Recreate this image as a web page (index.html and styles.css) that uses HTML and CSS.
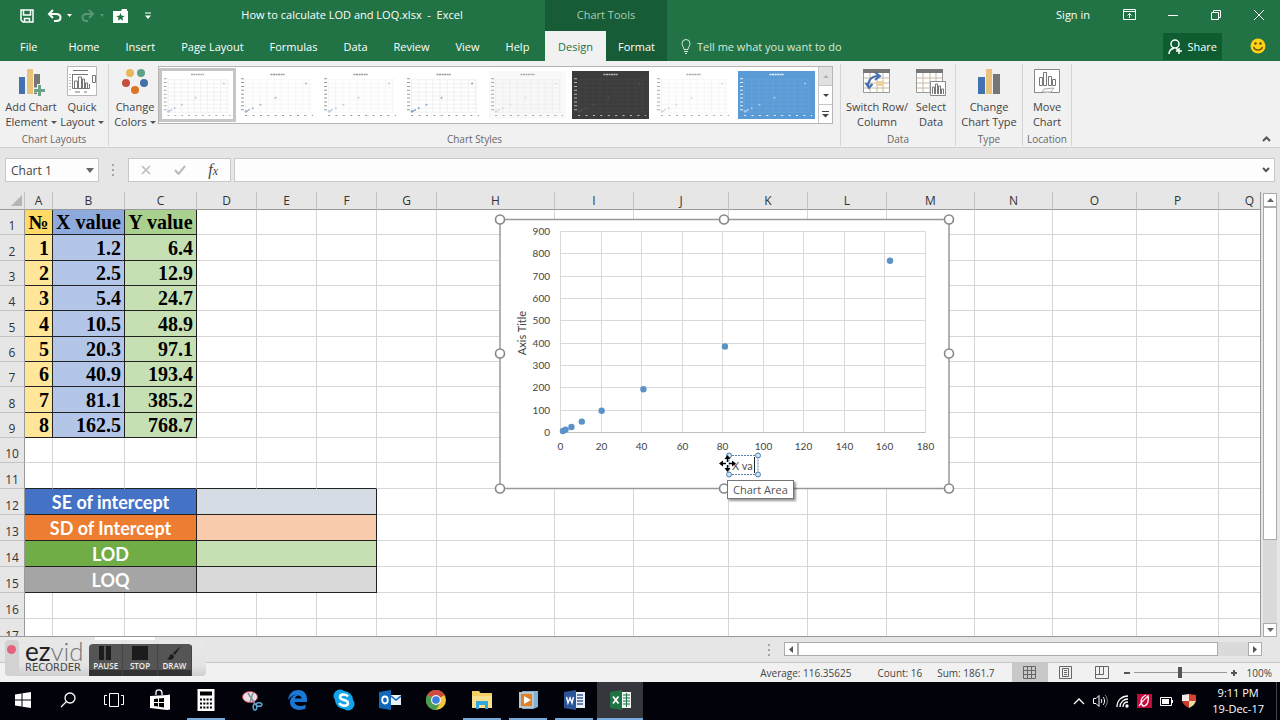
FILE: index.html
```html
<!DOCTYPE html>
<html lang="en">
<head>
  <meta charset="UTF-8" />
  <meta name="viewport" content="width=device-width, initial-scale=1.0"/>
  <title>How to calculate LOD and LOQ.xlsx - Excel</title>
  <link rel="stylesheet" href="styles.css">
</head>
<body>
  <header class="titlebar">
    <div class="titlebar-left">
      <div class="quick-access">
        <button class="qa-btn" aria-label="Save"><svg width="14" height="14" viewBox="0 0 14 14" fill="none" stroke="#fff" stroke-width="1.5"><path d="M1 1h12v12H3l-2-2z"/><path d="M3.500 1v5h7V1M4.500 13V9.500h5V13"/></svg></button>
        <button class="qa-btn" aria-label="Undo"><svg width="26" height="14" viewBox="0 0 26 14"><path d="M6 1L2 5l4 4M2.500 5H9c6 0 6 7 0 7H7" fill="none" stroke="#fff" stroke-width="2"/><path d="M20 5h5l-2.500 3z" fill="#fff"/></svg></button>
        <button class="qa-btn dim" aria-label="Redo"><svg width="24" height="14" viewBox="0 0 24 14"><path d="M8 1l4 4-4 4M11.500 5H6C0 5 0 12 6 12h1" fill="none" stroke="#fff" stroke-width="2"/><path d="M19 5h4l-2 3z" fill="#fff"/></svg></button>
        <button class="qa-btn" aria-label="Favorites"><svg width="16" height="14" viewBox="0 0 16 14"><path d="M0 2h8l1-2h5v2h1v12H0z" fill="#fff"/><path d="M7.500 4l1.200 2.700 3 .2-2.300 1.900.8 2.900-2.700-1.600-2.600 1.600.7-2.900-2.300-1.900 3-.2z" fill="#217346"/></svg></button>
        <button class="qa-btn" aria-label="Customize"><svg width="6" height="8" viewBox="0 0 6 8"><path d="M0 1h6" stroke="#fff"/><path d="M0 3.500h6L3 7z" fill="#fff"/></svg></button>
      </div>
      <div class="doc-title">How to calculate LOD and LOQ.xlsx&nbsp; -&nbsp; Excel</div>
    </div>
    <div class="context-title">Chart Tools</div>
    <div class="titlebar-right">
      <a class="sign-in" href="#">Sign in</a>
      <button class="win-btn" aria-label="Ribbon display options"><svg width="13" height="11" viewBox="0 0 13 11" fill="none" stroke="#fff"><path d="M.5.5h12v10H.5zM.5 2.500h12M6.500 9V4.500M4.500 6.500l2-2 2 2"/></svg></button>
      <button class="win-btn" aria-label="Minimize"><svg width="10" height="10" viewBox="0 0 10 10"><path d="M0 5.500h10" stroke="#fff"/></svg></button>
      <button class="win-btn" aria-label="Restore"><svg width="10" height="10" viewBox="0 0 10 10" fill="none" stroke="#fff"><path d="M.5 2.500h7v7h-7zM2.500 2.500v-2h7v7h-2"/></svg></button>
      <button class="win-btn" aria-label="Close"><svg width="10" height="10" viewBox="0 0 10 10"><path d="M0 0l10 10M10 0L0 10" stroke="#fff"/></svg></button>
    </div>
  </header>

  <nav class="tabs">
    <div class="tabs-main">
      <button class="tab tab-file">File</button>
      <button class="tab">Home</button>
      <button class="tab">Insert</button>
      <button class="tab">Page Layout</button>
      <button class="tab">Formulas</button>
      <button class="tab">Data</button>
      <button class="tab">Review</button>
      <button class="tab">View</button>
      <button class="tab">Help</button>
    </div>
    <div class="tabs-context">
      <button class="tab tab-active">Design</button>
      <button class="tab">Format</button>
    </div>
    <button class="tell-me"><svg width="10" height="15" viewBox="0 0 10 15" fill="none" stroke="#d5eadd"><path d="M3 10.500C3 8 1 7 1 4.500a4 4 0 0 1 8 0C9 7 7 8 7 10.500zM3 12.500h4M4 14.500h2"/></svg>Tell me what you want to do</button>
    <button class="share"><svg width="15" height="16" viewBox="0 0 15 16" fill="none" stroke="#fff" stroke-width="1.500"><circle cx="7" cy="5" r="4"/><path d="M1 15c0-3 2-5 5-6M8 9l2 2M11 9v6M8 12h6"/></svg>Share</button>
    <button class="smile" aria-label="Feedback"><svg width="16" height="16" viewBox="0 0 16 16"><circle cx="8" cy="8" r="7.500" fill="#fcd116"/><circle cx="5.500" cy="5.500" r="1.200" fill="#5b4300"/><circle cx="10.500" cy="5.500" r="1.200" fill="#5b4300"/><path d="M3.500 9c1.500 4 7.500 4 9 0" fill="none" stroke="#5b4300" stroke-width="1.200"/></svg></button>
  </nav>

  <section class="ribbon">
    <div class="group">
      <div class="group-items">
        <button class="big-btn btn-mid"><svg width="28" height="30" viewBox="0 0 28 30"><path d="M2 11h6v17H2z" fill="#4472b0"/><path d="M10 3h6v25h-6z" fill="#e8c27a"/><path d="M17 8h6v20h-6z" fill="#767676"/><path d="M22.500 18v12M17 24h11" stroke="#f1f1f1" stroke-width="5"/><path d="M22.500 19v11M17 24.500h11" stroke="#6ba08a" stroke-width="3"/></svg><span>Add Chart<br>Element<i class="caret"></i></span></button>
        <button class="big-btn"><svg width="30" height="30" viewBox="0 0 30 30" fill="none" stroke="#777"><path d="M.5.500h29v29H.5z" fill="#fff" stroke="#b8b8b8"/><path d="M6 4.500h15M6 8.500h15M5.500 8v14.500h17V18M25.500 9.500h3v7h-3zM8 26h5M17 26h3"/><path d="M7.500 22v-7h3v7M11.500 22V11h3v11M15.500 22v-9h2v9M18.500 22v-5h2v5"/><path d="M3 8v16" stroke-dasharray="1 2"/></svg><span>Quick<br>Layout<i class="caret"></i></span></button>
      </div>
      <div class="group-label">Chart Layouts</div>
    </div>
    <div class="group group-styles">
      <div class="group-items">
        <button class="big-btn"><svg width="28" height="30" viewBox="0 0 28 30"><circle cx="9" cy="7" r="4" fill="#e8b75c"/><circle cx="20" cy="7" r="4" fill="#5fa286"/><circle cx="5" cy="17" r="4" fill="#c6503b"/><circle cx="23" cy="17" r="4" fill="#4472a8"/><circle cx="14" cy="24" r="4" fill="#dd7422"/></svg><span>Change<br>Colors<i class="caret"></i></span></button>
        <div class="gallery">
          <div class="thumbs" id="thumbs"></div>
          <div class="gallery-scroll">
            <button class="gs-btn gs-off" aria-label="Previous styles"><svg width="6" height="3" viewBox="0 0 6 3"><path d="M0 3h6L3 0z" fill="#b0b0b0"/></svg></button>
            <button class="gs-btn" aria-label="Next styles"><svg width="6" height="3" viewBox="0 0 6 3"><path d="M0 0h6L3 3z" fill="#444"/></svg></button>
            <button class="gs-btn" aria-label="More styles"><svg width="7" height="7" viewBox="0 0 7 7"><path d="M0 .5h7" stroke="#444"/><path d="M0 3h7L3.500 6.500z" fill="#444"/></svg></button>
          </div>
        </div>
      </div>
      <div class="group-label">Chart Styles</div>
    </div>
    <div class="group">
      <div class="group-items">
        <button class="big-btn btn-wide"><svg width="28" height="30" viewBox="0 0 28 30" fill="none"><path d="M.5 4.500h26v22H.5z" fill="#fff" stroke="#999"/><path d="M0 3h27v4H0z" fill="#767676"/><path d="M1 12h25M1 17h25M1 22h25M7 7v19M14 7v19M20 7v19" stroke="#c8b8a0"/><path d="M14 15h6v5h-6z" fill="#f3cf9b"/><path d="M5 20C5 14 9 10 15 10M2.500 17L6 22l3.500-4M12 6.500l5 3.500-5 4" stroke="#3f6fb0" stroke-width="2"/></svg><span>Switch Row/<br>Column</span></button>
        <button class="big-btn btn-small"><svg width="30" height="30" viewBox="0 0 30 30" fill="none"><path d="M.5 4.500h26v22H.5z" fill="#fff" stroke="#999"/><path d="M0 3h27v4H0z" fill="#767676"/><path d="M1 12h25M1 17h25M1 22h25M7 7v19M14 7v19M20 7v19" stroke="#c8b8a0"/><path d="M14.500 15.500h15v14h-15z" fill="#fff" stroke="#888"/><path d="M16.500 28v-7h2v7M19.500 28v-10h2v10M22.500 28v-8h2v8M25.500 28v-5h2v5" stroke="#777"/></svg><span>Select<br>Data</span></button>
      </div>
      <div class="group-label">Data</div>
    </div>
    <div class="group">
      <div class="group-items">
        <button class="big-btn btn-type"><svg width="24" height="30" viewBox="0 0 24 30"><path d="M1 11h7v17H1z" fill="#4472b0"/><path d="M9 3h6v25H9z" fill="#e8c27a"/><path d="M16 8h7v20h-7z" fill="#767676"/></svg><span>Change<br>Chart Type</span></button>
      </div>
      <div class="group-label">Type</div>
    </div>
    <div class="group">
      <div class="group-items">
        <button class="big-btn btn-small"><svg width="28" height="30" viewBox="0 0 28 30" fill="none" stroke="#888"><path d="M1.500 3.500h25v23h-9l-3-1-4 1h-9z" fill="#fff"/><path d="M6.500 19.500v-8h3v8zM10.500 19.500v-13h3v13zM15.500 19.500v-9h3v9zM19.500 19.500v-6h3v6z" stroke="#777"/><path d="M9 26l2-3 10-1-3 4z" fill="#fff" stroke="#aaa"/></svg><span>Move<br>Chart</span></button>
      </div>
      <div class="group-label">Location</div>
    </div>
    <button class="collapse" aria-label="Collapse the ribbon"><svg width="9" height="6" viewBox="0 0 9 6"><path d="M1 5l3.500-3.500L8 5" fill="none" stroke="#555" stroke-width="2"/></svg></button>
  </section>

  <div class="formula-bar">
    <div class="name-box">
      <input class="name-input" aria-label="Name box" value="Chart 1">
      <button class="name-drop" aria-label="Open name list"><svg width="8" height="5" viewBox="0 0 8 5"><path d="M0 0h8L4 5z" fill="#666"/></svg></button>
    </div>
    <svg class="grip" width="3" height="14" viewBox="0 0 3 14" fill="#a5a5a5"><path d="M0 1h2v2H0zM0 6h2v2H0zM0 11h2v2H0z"/></svg>
    <div class="fx-box">
      <button class="fx-btn" aria-label="Cancel"><svg width="10" height="10" viewBox="0 0 10 10"><path d="M1 1l8 8M9 1L1 9" stroke="#bbb" stroke-width="1.500"/></svg></button>
      <button class="fx-btn" aria-label="Enter"><svg width="12" height="10" viewBox="0 0 12 10"><path d="M1 5l3.500 4L11 1" fill="none" stroke="#bbb" stroke-width="2"/></svg></button>
      <button class="fx-btn fx-label" aria-label="Insert function"><i>f<small>x</small></i></button>
    </div>
    <div class="formula-box">
      <input class="formula-input" aria-label="Formula">
      <button class="name-drop" aria-label="Expand formula bar"><svg width="8" height="6" viewBox="0 0 8 6"><path d="M1 1l3 3 3-3" fill="none" stroke="#555" stroke-width="2"/></svg></button>
    </div>
  </div>

  <main class="workspace">
    <div class="sheet">
      <table class="grid" id="grid"></table>

      <div class="chart">
        <svg id="chart" width="450" height="270" viewBox="0 0 450 270"></svg>
        <input class="axis-input" aria-label="Horizontal axis title" value="X va">
        <svg class="axis-frame" width="36" height="26" viewBox="0 0 36 26" fill="none"><path d="M4 3.500h29v19H4z" stroke="#5b7ea6" stroke-dasharray="2 1"/><path d="M29.500 5v16" stroke="#222"/><g fill="#cfe3f5" stroke="#4a80b0"><circle cx="4" cy="3.500" r="2.500"/><circle cx="33" cy="3.500" r="2.500"/><circle cx="4" cy="22.500" r="2.500"/><circle cx="33" cy="22.500" r="2.500"/></g></svg>
        <svg class="cursor" width="17" height="17" viewBox="0 0 17 17"><path d="M8.500 2.500v12M2.500 8.500h12" stroke="#000" stroke-width="1.500" stroke-dasharray="4.500 3"/><path d="M8.500 0l3 4h-6zM8.500 17l3-4h-6zM0 8.500l4-3v6zM17 8.500l-4-3v6z"/></svg>
        <div class="tooltip">Chart Area</div>
      </div>
    </div>
    <div class="vscroll">
      <button class="sb-btn" aria-label="Scroll up"><svg width="7" height="4" viewBox="0 0 7 4"><path d="M0 4h7L3.500 0z" fill="#666"/></svg></button>
      <div class="v-thumb"></div>
      <div class="v-track"></div>
      <button class="sb-btn" aria-label="Scroll down"><svg width="7" height="4" viewBox="0 0 7 4"><path d="M0 0h7L3.500 4z" fill="#666"/></svg></button>
    </div>
  </main>

  <footer class="bottom">
    <div class="sheet-bar">
      <div class="sheet-tab"></div>
      <svg class="grip" width="3" height="14" viewBox="0 0 3 14" fill="#a5a5a5"><path d="M0 1h2v2H0zM0 6h2v2H0zM0 11h2v2H0z"/></svg>
      <div class="hscroll">
        <button class="sb-btn" aria-label="Scroll left"><svg width="4" height="7" viewBox="0 0 4 7"><path d="M4 0v7L0 3.500z" fill="#555"/></svg></button>
        <div class="h-thumb"></div>
        <div class="h-track"></div>
        <button class="sb-btn" aria-label="Scroll right"><svg width="4" height="7" viewBox="0 0 4 7"><path d="M0 0v7l4-3.500z" fill="#555"/></svg></button>
      </div>
    </div>

    <div class="status">
      <div class="stats">
        <span>Average: 116.35625</span>
        <span class="stat-count">Count: 16</span>
        <span>Sum: 1861.7</span>
      </div>
      <button class="view-btn view-on" aria-label="Normal view"><svg width="13" height="13" viewBox="0 0 13 13" fill="none" stroke="#666"><path d="M.5.500h12v12H.5zM4.500 0v13M8.500 0v13M0 4.500h13M0 8.500h13"/></svg></button>
      <button class="view-btn" aria-label="Page layout view"><svg width="13" height="13" viewBox="0 0 13 13" fill="none" stroke="#666"><path d="M.5.500h12v12H.5zM3.500 2.500h6v8h-6zM5 4.500h3M5 6.500h3M5 8.500h3"/></svg></button>
      <button class="view-btn" aria-label="Page break view"><svg width="14" height="13" viewBox="0 0 14 13" fill="none" stroke="#666"><path d="M.5.500h13v12H.5zM.5 8.500h8v-8M4.500 8.500v-8"/></svg></button>
      <button class="zoom-btn" aria-label="Zoom out"><svg width="6" height="6" viewBox="0 0 6 6"><path d="M0 3h6" stroke="#555" stroke-width="2"/></svg></button>
      <input class="zoom-range" type="range" min="10" max="190" value="100" aria-label="Zoom">
      <button class="zoom-btn" aria-label="Zoom in"><svg width="6" height="6" viewBox="0 0 6 6"><path d="M0 3h6M3 0v6" stroke="#555" stroke-width="2"/></svg></button>
      <span class="zoom-value">100%</span>
    </div>

    <div class="recorder">
      <div class="rec-dot"></div>
      <div class="rec-logo"><div><b>ez</b>vid</div><small>RECORDER</small></div>
      <div class="rec-buttons">
        <button><svg width="16" height="16" viewBox="0 0 16 16"><path d="M1 1h5v14H1zM8 1h5v14H8z" fill="#1c1c1c"/></svg>PAUSE</button>
        <button><svg width="16" height="16" viewBox="0 0 16 16"><path d="M0 1h16v14H0z" fill="#1c1c1c"/></svg>STOP</button>
        <button><svg width="16" height="16" viewBox="0 0 16 16"><path d="M15 1L7 8l2 2zM6 9c-3 0-2 4-5 5 4 2 7 0 7-3z" fill="#1c1c1c"/></svg>DRAW</button>
      </div>
    </div>
  </footer>

  <div class="taskbar">
    <button class="task task-start" aria-label="Start"><svg width="16" height="16" viewBox="0 0 16 16" fill="#fff"><path d="M0 2.500L6.500 1.500v6H0zM7.500 1.300L16 0v7.500H7.500zM0 8.500h6.500v6L0 13.500zM7.500 8.500H16V16l-8.500-1.300z"/></svg></button>
    <button class="task" aria-label="Search"><svg width="16" height="16" viewBox="0 0 16 16" fill="none" stroke="#fff" stroke-width="1.300"><circle cx="10" cy="6" r="5"/><path d="M6.500 9.500L1 15"/></svg></button>
    <button class="task" aria-label="Task view"><svg width="20" height="14" viewBox="0 0 20 14" fill="none" stroke="#fff"><path d="M5.500.500h9v13h-9zM3 2.500H.5v9H3M17 2.500h2.500v9H17"/></svg></button>
    <button class="task" aria-label="Store"><svg width="20" height="22" viewBox="0 0 20 22"><path d="M6 6V3c0-3 6-3 6 1v2" fill="none" stroke="#fff" stroke-width="1.300"/><path d="M0 7l17-1 3-.500v15L17 21 0 19z" fill="#fff"/><path d="M4 10l4-.500v3.500H4zM9 9.500l5-.500v4H9zM4 14h4v3.500L4 17zM9 14h5v4.500l-5-.800z" fill="#000"/></svg></button>
    <button class="task task-run" aria-label="Calculator"><svg width="18" height="22" viewBox="0 0 18 22"><path d="M.5 0h17v22H.5z" fill="#fff"/><path d="M3 2.500h12v4H3z" fill="#000"/><path d="M3 10.500h12M3 14.500h12M3 18.500h12" stroke="#000" stroke-width="2" stroke-dasharray="2 1.300"/></svg></button>
    <button class="task" aria-label="Snipping tool"><svg width="22" height="22" viewBox="0 0 22 22" fill="none"><ellipse cx="9" cy="8" rx="7.500" ry="5.500" fill="#e9dfe4" stroke="#c4405a"/><path d="M7 4l7 11M12 4L9 13" stroke="#8a8f99" stroke-width="1.500"/><ellipse cx="14" cy="18" rx="1.800" ry="3" stroke="#5ca7d8" stroke-width="1.500"/><ellipse cx="18" cy="15.500" rx="3" ry="1.800" stroke="#5ca7d8" stroke-width="1.500"/></svg></button>
    <button class="task" aria-label="Edge"><svg width="20" height="20" viewBox="0 0 20 20"><path d="M0 10C1 3 5 0 10.500 0 16 0 19 4 19 9v3H6.500c.5 4 6 5.500 11 2.500v4C10 22 1.500 19 2 11.500 2.300 8 4.500 6 7.500 5 5 5 2 7 0 10zM7 8.500h6.500C13.500 4.500 7.500 4.500 7 8.500z" fill="#1a77d4" fill-rule="evenodd"/></svg></button>
    <button class="task" aria-label="Skype"><svg width="22" height="22" viewBox="0 0 22 22"><circle cx="7" cy="7" r="6.500" fill="#12a5e8"/><circle cx="15" cy="15" r="6.500" fill="#12a5e8"/><circle cx="11" cy="11" r="9" fill="#12a5e8"/><path d="M15 7.500C13 4.500 7 5 7 8c0 4 8 2 8 6 0 3.500-7 3.500-8.500 0" fill="none" stroke="#fff" stroke-width="2.500"/></svg></button>
    <button class="task" aria-label="Outlook"><svg width="22" height="20" viewBox="0 0 22 20"><path d="M11 5h11v10H11z" fill="#e8f1fa"/><path d="M12 6l5 4 5-4" fill="none" stroke="#1565b5" stroke-width="1.500"/><path d="M0 2l12-2v20L0 18z" fill="#1268b8"/><ellipse cx="6" cy="10" rx="2.800" ry="3.500" fill="none" stroke="#fff" stroke-width="1.800"/></svg></button>
    <button class="task" aria-label="Chrome"><svg width="20" height="20" viewBox="0 0 20 20"><circle cx="10" cy="10" r="10" fill="#f4c63d"/><path d="M10 10L1.300 5a10 10 0 0 1 17.400 0z" fill="#cf4a3f"/><path d="M10 10L1.300 5A10 10 0 0 0 10 20l3.500-6z" fill="#4a9c52"/><circle cx="10" cy="10" r="5" fill="#f3f3f3"/><circle cx="10" cy="10" r="3.800" fill="#3f7de0"/></svg></button>
    <button class="task task-run" aria-label="File Explorer"><svg width="20" height="18" viewBox="0 0 20 18"><path d="M0 0h7l1.500 2H20v15H0z" fill="#f4cf63"/><path d="M0 5h20v12H0z" fill="#f9e08c"/><path d="M4 10h12v8h-3v-4H7v4H4z" fill="#36a7dc"/></svg></button>
    <button class="task task-run" aria-label="Media player"><svg width="19" height="18" viewBox="0 0 19 18"><path d="M3 0h16v16l-5 2H3z" fill="#7fb2d3"/><path d="M0 1h15v16H0z" fill="#b9c4cb"/><path d="M2 3h11v12H2z" fill="#df7f28"/><path d="M5 5v8l7-4z" fill="#fff"/></svg></button>
    <button class="task task-run" aria-label="Word"><svg width="21" height="20" viewBox="0 0 21 20"><path d="M10 2h11v16H10z" fill="#e9eef6"/><path d="M13 5h6M13 8h6M13 11h6M13 14h6" stroke="#3a5a9b" stroke-width="1.300"/><path d="M0 2l12-2v20L0 18z" fill="#2a5699"/><path d="M2.500 7l1.500 6 2-5 2 5 1.500-6" fill="none" stroke="#fff" stroke-width="1.400"/></svg></button>
    <button class="task task-active" aria-label="Excel"><svg width="21" height="20" viewBox="0 0 21 20"><path d="M10 2h11v16H10z" fill="#eef5f0"/><path d="M13 5h7M13 8h7M13 11h7M13 14h7M16.500 3v14" stroke="#1f7244"/><path d="M0 2l12-2v20L0 18z" fill="#1f7244"/><path d="M3 6.500l5.500 7M8.500 6.500L3 13.500" stroke="#fff" stroke-width="1.800"/></svg></button>
    <div class="tray">
      <svg width="12" height="7" viewBox="0 0 12 7"><path d="M1 6l5-5 5 5" fill="none" stroke="#fff" stroke-width="1.300"/></svg>
      <svg width="15" height="14" viewBox="0 0 15 14" fill="none" stroke="#fff"><path d="M.5 4.500H3l3-3v11l-3-3H.5zM8 5c1 1 1 3 0 4M10 3c2 2 2 6 0 8"/><path d="M12 1c3 3 3 9 0 12" stroke="#888"/></svg>
      <svg width="13" height="13" viewBox="0 0 13 13" fill="none" stroke="#fff" stroke-width="1.300"><path d="M1 12C1 5 6 1 12 1M4 12c0-5 4-8 8-8M7 12c0-3 2-5 5-5"/><circle cx="11" cy="11" r="1" fill="#fff"/></svg>
      <svg width="15" height="14" viewBox="0 0 15 14" fill="none"><path d="M0 0h15v14H0z" fill="#c30b3c"/><path d="M9 1C3 4 3 9 6 12c5 0 6-6 5-10-3 3-6 5-9 10" stroke="#fff" stroke-width="1.300"/></svg>
      <svg width="14" height="9" viewBox="0 0 14 9"><path d="M.5.500h11v8H.5zM12.500 3v3" fill="none" stroke="#fff"/><path d="M2 2h7v5H2z" fill="#fff"/></svg>
      <svg width="14" height="14" viewBox="0 0 14 14"><path d="M0 1l7-1v7H0z" fill="#f4ece4"/><path d="M7 0l7 1v6H7z" fill="#d9402f"/><path d="M0 7h7v7C3 12 1 10 0 7z" fill="#c63c2c"/><path d="M14 7H7v7c4-2 6-4 7-7z" fill="#f0d9a0"/></svg>
      <div class="clock">9:11 PM<br>19-Dec-17</div>
    </div>
  </div>

  <script src="script.js"></script>
</body>
</html>
```

FILE: styles.css
```css
* {
  box-sizing: border-box;
}
body {
  margin: 0;
  height: 100vh;
  display: flex;
  flex-direction: column;
  overflow: hidden;
  font-family: "Open Sans", "Noto Sans", sans-serif;
  font-size: 11px;
  color: #444;
  background: #e6e6e6;
}
button, input {
  font-family: inherit;
  font-size: inherit;
  color: inherit;
  background: none;
  border: 0;
  padding: 0;
  margin: 0;
  outline: none;
}
svg {
  display: block;
  flex: none;
}

/* title bar */
.titlebar {
  display: flex;
  height: 31px;
  flex: none;
  background: #217346;
  color: #fff;
}
.titlebar-left {
  display: flex;
  width: 545px;
}
.quick-access {
  display: flex;
  align-items: center;
  gap: 8px;
  width: 159px;
  padding-left: 20px;
}
.qa-btn:nth-child(2) {
  margin-left: 5px;
}
.qa-btn:nth-child(5) {
  margin-left: 8px;
}
.dim {
  opacity: 0.25;
}
.doc-title {
  flex: 1;
  text-align: center;
  line-height: 30px;
}
.context-title {
  width: 122px;
  text-align: center;
  line-height: 30px;
  background: #185c37;
  color: #a5cfb5;
}
.titlebar-right {
  display: flex;
  flex: 1;
  justify-content: flex-end;
}
.sign-in {
  color: #fff;
  text-decoration: none;
  line-height: 30px;
  margin-right: 18px;
}
.win-btn {
  display: flex;
  align-items: center;
  justify-content: center;
  width: 43px;
  height: 29px;
}

/* ribbon tabs */
.tabs {
  display: flex;
  height: 30px;
  flex: none;
  background: #217346;
  color: #fff;
}
.tabs-main {
  display: flex;
  width: 545px;
  padding-left: 2px;
}
.tab {
  padding: 0 13px;
  white-space: nowrap;
}
.tab-file {
  padding: 0 18px;
}
.tabs-context {
  display: flex;
  width: 122px;
  background: #185c37;
}
.tabs-context .tab {
  flex: 1;
  padding: 0;
}
.tabs-context .tab-active {
  background: #f1f1f1;
  color: #217346;
}
.tell-me {
  display: flex;
  align-items: center;
  gap: 6px;
  margin-left: 14px;
  color: #d5eadd;
}
.share {
  display: flex;
  align-items: center;
  gap: 4px;
  height: 27px;
  margin: 2px 0 0 auto;
  padding: 0 5px;
  background: #0e5c2f;
}
.smile {
  margin: 0 14px 0 28px;
}

/* ribbon */
.ribbon {
  display: flex;
  height: 87px;
  flex: none;
  background: #f1f1f1;
  border-bottom: 1px solid #d2d2d2;
}
.group {
  display: flex;
  flex-direction: column;
  margin: 3px 0 1px;
  padding: 0 3px;
  border-right: 1px solid #d4d4d4;
}
.group-styles {
  width: 732px;
}
.group-items {
  display: flex;
  flex: 1;
}
.group-label {
  text-align: center;
  font-size: 10px;
  line-height: 13px;
  color: #666;
}
.big-btn {
  display: flex;
  flex-direction: column;
  align-items: center;
  gap: 3px;
  width: 46px;
  padding-top: 2px;
  line-height: 15px;
  white-space: nowrap;
}
.btn-small {
  width: 42px;
}
.btn-mid {
  width: 56px;
}
.btn-type {
  width: 60px;
}
.btn-wide {
  width: 66px;
}
.caret {
  display: inline-block;
  margin-left: 3px;
  vertical-align: 2px;
  border: 3px solid transparent;
  border-top-color: #555;
  border-bottom: 0;
}
.gallery {
  display: flex;
  flex: 1;
  height: 58px;
  margin: 2px 4px 0 0;
  border: 1px solid #b5b5b5;
  background: #fff;
}
.thumbs {
  display: flex;
  flex: 1;
}
.thumb {
  flex: 1;
  padding: 4px 3px;
}
.thumb svg {
  width: 100%;
  height: 100%;
}
.thumb-on {
  padding: 1px 0;
}
.thumb-on svg {
  border: 3px solid #c6c6c6;
}
.gallery-scroll {
  display: flex;
  flex-direction: column;
  width: 14px;
}
.gs-btn {
  display: flex;
  flex: 1;
  align-items: center;
  justify-content: center;
  border-left: 1px solid #c6c6c6;
  border-bottom: 1px solid #c6c6c6;
}
.gs-btn:last-child {
  border-bottom: 0;
}
.gs-off {
  background: #e1e1e1;
}
.collapse {
  align-self: flex-end;
  margin: 0 9px 5px auto;
}

/* formula bar */
.formula-bar {
  display: flex;
  flex: none;
  height: 44px;
  padding: 10px 5px 10px;
  font-size: 12px;
}
.name-box, .fx-box, .formula-box {
  display: flex;
  background: #fdfdfd;
  border: 1px solid #c8c8c8;
}
.name-box {
  width: 94px;
}
.name-input {
  width: 76px;
  padding-left: 5px;
}
.name-drop {
  display: flex;
  align-items: center;
  justify-content: center;
  width: 16px;
}
.grip {
  align-self: center;
  margin: 0 13px;
}
.fx-box {
  width: 103px;
}
.fx-btn {
  display: flex;
  flex: 1;
  align-items: center;
  justify-content: center;
}
.fx-label {
  font-family: "Liberation Serif", serif;
  font-size: 16px;
}
.fx-label small {
  font-size: 12px;
}
.formula-box {
  flex: 1;
  margin-left: 3px;
}
.formula-input {
  flex: 1;
}

/* worksheet */
.workspace {
  display: flex;
  flex: 1;
  min-height: 0;
}
.sheet {
  position: relative;
  flex: 1;
  overflow: hidden;
  background: #fff;
  border-right: 1px solid #999;
  border-bottom: 1px solid #999;
}
.grid {
  width: 1281px;
  table-layout: fixed;
  border-spacing: 0;
}
.grid th {
  padding: 0;
  font-weight: normal;
  font-size: 12px;
  line-height: 16px;
  background: #e6e6e6;
  color: #333;
  border-right: 1px solid #c3c3c3;
  border-bottom: 1px solid #c3c3c3;
}
.grid thead th {
  height: 18px;
  border-bottom-color: #999;
}
.grid tbody th {
  vertical-align: bottom;
  border-right-color: #999;
}
.corner svg {
  margin: 0 0 0 auto;
}
.grid td {
  height: 25px;
  padding: 0 3px;
  border-right: 1px solid #d6d6d6;
  border-bottom: 1px solid #d6d6d6;
  overflow: hidden;
  white-space: nowrap;
}
.grid .tall td {
  height: 26px;
}
.grid td.data {
  font: bold 20px/22px "Liberation Serif", serif;
  color: #000;
  text-align: right;
  border-color: #222;
}
.grid tr:first-child td.data {
  text-align: center;
  padding: 0;
}
.grid td.col-no { background: #ffe699; }
.grid td.col-x { background: #b4c6e7; }
.grid td.col-y { background: #c6e0b4; }
.grid tr:first-child td.col-no { background: #ffd966; }
.grid tr:first-child td.col-x { background: #8ea9db; }
.grid tr:first-child td.col-y { background: #a9d08e; }
.grid td.above {
  border-bottom-color: #222;
}
.grid td.result {
  border-color: #222;
  font: bold 18px/24px Lato, sans-serif;
  color: #fff;
  text-align: center;
}
.grid td.se { background: #4472c4; }
.grid td.se-value { background: #d6dce4; }
.grid td.sd { background: #ed7d31; }
.grid td.sd-value { background: #f8cbad; }
.grid td.lod { background: #70ad47; }
.grid td.lod-value { background: #c6e0b4; }
.grid td.loq { background: #a5a5a5; }
.grid td.loq-value { background: #d9d9d9; }

/* chart floats over the cells */
.chart {
  position: absolute;
  left: 500px;
  top: 27px;
  font-family: Lato, sans-serif;
}
.chart svg {
  overflow: visible;
}
.chart text {
  font-size: 10px;
  fill: #444;
}
.chart .axis-title {
  font-size: 11px;
}
.axis-input {
  position: absolute;
  left: 232px;
  top: 237px;
  width: 26px;
  height: 18px;
  color: #555;
}
.axis-frame {
  position: absolute;
  left: 225px;
  top: 233px;
}
.cursor {
  position: absolute;
  left: 219px;
  top: 236px;
}
.tooltip {
  position: absolute;
  left: 227px;
  top: 261px;
  padding: 0 5px;
  line-height: 17px;
  font-family: "Open Sans", sans-serif;
  white-space: nowrap;
  color: #555;
  background: #fff;
  border: 1px solid #767676;
  box-shadow: 2px 2px 2px rgba(0, 0, 0, 0.4);
}

/* scroll bars */
.vscroll {
  display: flex;
  flex-direction: column;
  width: 14px;
  margin: 1px 3px 0 2px;
}
.sb-btn {
  display: flex;
  flex: none;
  align-items: center;
  justify-content: center;
  width: 14px;
  height: 14px;
  background: #fff;
  border: 1px solid #ababab;
}
.v-thumb {
  flex: 4;
  background: #fff;
  border: 1px solid #ababab;
}
.v-track {
  flex: 1;
  background: #dadada;
}
.bottom {
  position: relative;
  flex: none;
}
.sheet-bar {
  display: flex;
  justify-content: flex-end;
  height: 25px;
  padding: 0 18px 0 95px;
}
.sheet-tab {
  width: 60px;
  height: 4px;
  margin-right: auto;
  background: #fff;
}
.hscroll {
  display: flex;
  width: 41%;
  margin: 5px 0 6px;
}
.h-thumb {
  flex: 14;
  background: #fff;
  border: 1px solid #ababab;
}
.h-track {
  flex: 1;
  background: #dadada;
}

/* status bar */
.status {
  display: flex;
  align-items: center;
  justify-content: flex-end;
  height: 20px;
  padding-right: 8px;
  background: #f1f1f1;
  border-top: 1px solid #c6c6c6;
  font-size: 10px;
  color: #444;
}
.stats {
  display: flex;
  gap: 15px;
  margin-right: 17px;
}
.stat-count {
  margin-left: 11px;
}
.view-btn {
  display: flex;
  align-items: center;
  justify-content: center;
  width: 36px;
  height: 19px;
}
.view-on {
  background: #c8c8c8;
}
.zoom-btn {
  margin: 0 4px;
}
.zoom-range {
  appearance: none;
  width: 93px;
  height: 12px;
  background: linear-gradient(#999, #999) center / 100% 1px no-repeat;
}
.zoom-range::-webkit-slider-thumb {
  appearance: none;
  width: 4px;
  height: 11px;
  background: #555;
}
.zoom-value {
  margin-left: 6px;
}

/* recorder overlay */
.recorder {
  position: absolute;
  left: 5px;
  top: 3px;
  display: flex;
  width: 201px;
  height: 36px;
  border-radius: 4px;
  background: linear-gradient(#e8e8e8, #e4e4e4 70%, #cfcfcf);
}
.rec-dot {
  width: 14px;
  background: #d2d2d2;
  border-radius: 4px;
}
.rec-dot::before {
  content: "";
  display: block;
  width: 9px;
  height: 9px;
  margin: 5px 0 0 2px;
  border-radius: 50%;
  background: #e5637a;
}
.rec-logo {
  width: 70px;
  padding-left: 6px;
  font: 300 26px/22px Lato, sans-serif;
  color: #777;
}
.rec-logo b {
  font-weight: 400;
  color: #222;
}
.rec-logo small {
  display: block;
  font: 10px/12px "DejaVu Sans", sans-serif;
  color: #444;
}
.rec-buttons {
  display: flex;
  width: 103px;
  height: 32px;
  margin-top: 4px;
  border-radius: 4px 4px 0 0;
  overflow: hidden;
  background: linear-gradient(#555 80%, #333 80%);
}
.rec-buttons button {
  display: flex;
  flex: 1;
  flex-direction: column;
  align-items: center;
  padding-top: 1px;
  font-size: 8px;
  font-weight: 600;
  line-height: 10px;
  color: #eee;
  border-right: 1px solid #444;
}

/* taskbar */
.taskbar {
  display: flex;
  flex: none;
  height: 38px;
  background: #02030a;
  color: #fff;
}
.task {
  display: flex;
  align-items: center;
  justify-content: center;
  width: 46px;
  border-bottom: 2px solid transparent;
}
.task-start {
  width: 45px;
}
.task-run {
  background: linear-gradient(#76a9dc, #76a9dc) bottom / 38px 2px no-repeat border-box;
}
.task-active {
  background: #35373c;
  border-bottom-color: #76a9dc;
}
.tray {
  display: flex;
  align-items: center;
  gap: 8px;
  margin-left: auto;
  margin-right: 3px;
  padding-right: 12px;
  border-right: 1px solid #444;
}
.clock {
  margin-left: 8px;
  text-align: center;
  line-height: 16px;
}
```

FILE: script.js
```js
const columns = [
  ['A', 28], ['B', 72], ['C', 72], ['D', 60], ['E', 60], ['F', 60], ['G', 60], ['H', 118],
  ['I', 79], ['J', 95], ['K', 79], ['L', 79], ['M', 88], ['N', 78], ['O', 84], ['P', 82], ['Q', 62]
];
const rowTotal = 17;
const tallRows = [2, 5, 8, 11, 12, 13, 14, 15, 16, 17];

const data = [
  [1, '1.2', '6.4'],
  [2, '2.5', '12.9'],
  [3, '5.4', '24.7'],
  [4, '10.5', '48.9'],
  [5, '20.3', '97.1'],
  [6, '40.9', '193.4'],
  [7, '81.1', '385.2'],
  [8, '162.5', '768.7']
];

const results = {
  12: ['SE of intercept', 'se'],
  13: ['SD of Intercept', 'sd'],
  14: ['LOD', 'lod'],
  15: ['LOQ', 'loq']
};

function buildGrid() {
  let html = '<colgroup><col style="width:25px">';
  columns.forEach(([, width]) => { html += `<col style="width:${width}px">`; });
  html += '</colgroup><thead><tr><th class="corner"><svg width="14" height="14" viewBox="0 0 14 14"><path d="M12 1v11H1z" fill="#b5b5b5"/></svg></th>';
  columns.forEach(([name]) => { html += `<th scope="col">${name}</th>`; });
  html += '</tr></thead><tbody>';

  for (let row = 1; row <= rowTotal; row++) {
    html += `<tr class="${tallRows.includes(row) ? 'tall' : ''}"><th scope="row">${row}</th>`;
    let start = 0;
    if (row <= 9) {
      const values = row === 1 ? ['№', 'X value', 'Y value'] : data[row - 2];
      ['col-no', 'col-x', 'col-y'].forEach((name, i) => {
        html += `<td class="data ${name}">${values[i]}</td>`;
      });
      start = 3;
    } else if (results[row]) {
      const [label, name] = results[row];
      html += `<td class="result ${name}" colspan="3">${label}</td><td class="result ${name}-value" colspan="3"></td>`;
      start = 6;
    }
    for (let c = start; c < columns.length; c++) {
      html += row === 11 && c < 6 ? '<td class="above"></td>' : '<td></td>';
    }
    html += '</tr>';
  }
  document.getElementById('grid').innerHTML = html + '</tbody>';
}

function buildChart() {
  // plot area inside the chart frame
  const left = 60.5, right = 425.5, top = 12.5, bottom = 213.5;
  const px = v => left + v / 180 * (right - left);
  const py = v => bottom - v / 900 * (bottom - top);

  let svg = '<rect x="0" y="0.5" width="449" height="269" fill="#fff" stroke="#999" stroke-width="1.500"/>';
  for (let v = 0; v <= 180; v += 20) {
    const x = Math.floor(px(v)) + 0.5;
    svg += `<path d="M${x} ${top}V${bottom}" stroke="#d9d9d9"/>`;
    svg += `<text x="${x}" y="231" text-anchor="middle">${v}</text>`;
  }
  for (let v = 0; v <= 900; v += 100) {
    const y = Math.floor(py(v)) + 0.5;
    svg += `<path d="M${left} ${y}H${right}" stroke="${v ? '#d9d9d9' : '#bfbfbf'}"/>`;
    svg += `<text x="50" y="${y + 3}" text-anchor="end">${v}</text>`;
  }
  svg += '<text class="axis-title" transform="translate(26 114) rotate(-90)" text-anchor="middle">Axis Title</text>';
  data.forEach(([, x, y]) => {
    svg += `<circle cx="${px(x)}" cy="${py(y)}" r="3.2" fill="#5b93c9"/>`;
  });
  [[0, 0], [224, 0], [449, 0], [0, 134], [449, 134], [0, 269], [224, 269], [449, 269]].forEach(([x, y]) => {
    svg += `<circle cx="${x}" cy="${y + 0.5}" r="4.500" fill="#fff" stroke="#888" stroke-width="1.600"/>`;
  });
  document.getElementById('chart').innerHTML = svg;
}

function buildThumbs() {
  // background, grid line, mark and point colour of each style
  const styles = [
    ['#fff', '#f0f0f0', '#aaa', '#b5c6da'],
    ['#fff', '#f6f6f6', '#999', '#a8b5c4'],
    ['#fff', '#f6f6f6', '#999', '#bccde0'],
    ['#fff', '#f0f0f0', '#999', '#86a5cc'],
    ['#f9f9f9', '#efefef', '#aaa', '#ddd'],
    ['#3c3c3c', '#434343', '#bbb', '#48505a'],
    ['#fff', '#f5f5f5', '#aaa', '#d5dbe2'],
    ['#5b9bd5', '#64a1d9', '#e8f2fb', '#a5cbeb']
  ];
  let html = '';
  styles.forEach(([bg, line, mark, point], i) => {
    let svg = `<rect width="76" height="47" fill="${bg}"/>`;
    for (let x = 6; x <= 72; x += 7) svg += `<path d="M${x}.500 8v32" stroke="${line}"/>`;
    for (let y = 8; y <= 40; y += 4) svg += `<path d="M6 ${y}.500h66" stroke="${line}"/>`;
    svg += `<path d="M31 3.500h14" stroke="${mark}" stroke-width="1.500" stroke-dasharray="2 .5"/>`;
    svg += `<path d="M3.500 7v34" stroke="${mark}" stroke-width="3" stroke-dasharray="1 2.800"/>`;
    svg += `<path d="M6 43.500h67" stroke="${mark}" stroke-dasharray="2 5.300"/>`;
    data.forEach(([, x, y]) => {
      svg += `<circle cx="${6 + x * 0.37}" cy="${40 - y * 0.036}" r="1" fill="${point}"/>`;
    });
    html += `<div class="thumb ${i === 0 ? 'thumb-on' : ''}"><svg viewBox="0 0 76 47" preserveAspectRatio="none">${svg}</svg></div>`;
  });
  document.getElementById('thumbs').innerHTML = html;
}

buildGrid();
buildChart();
buildThumbs();
```
